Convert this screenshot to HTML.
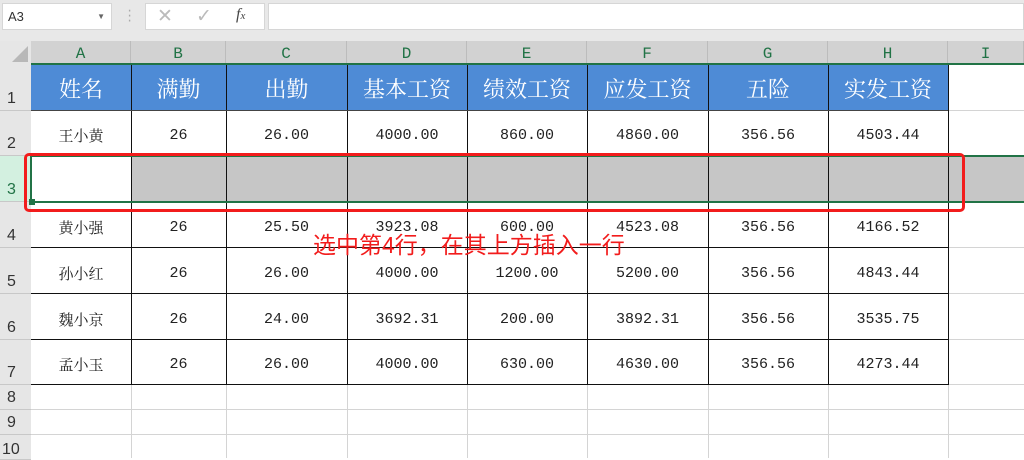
<!DOCTYPE html>
<html><head><meta charset="utf-8"><style>
*{margin:0;padding:0;box-sizing:border-box}
body{width:1024px;height:458px;overflow:hidden;background:#fff;position:relative;font-family:"Liberation Mono","Noto Serif CJK SC",serif}
.a{position:absolute}
.ch{position:absolute;top:41px;height:24px;background:#d2d2d2;color:#217346;font-size:16px;text-align:center;line-height:26px;border-right:1px solid #bcbcbc;font-family:"Liberation Mono",monospace}
.rh{position:absolute;left:0;width:31px;background:#e6e6e6;color:#333;font-family:"Liberation Sans",sans-serif;font-size:16px;padding-left:7px;border-bottom:1px solid #c8c8c8;display:flex;align-items:flex-end}
.c{position:absolute;text-align:center;display:flex;align-items:center;justify-content:center;font-size:15px;color:#222;padding-top:4px}
.h{color:#fff;font-size:22px;background:#4e8bd6;padding-top:0}
.vl{position:absolute;width:1px;background:#111}
.hl{position:absolute;height:1px;background:#111}
</style></head><body>
<div class="a" style="left:0;top:0;width:1024px;height:41px;background:#e8e8e8"></div>
<div class="a" style="left:2px;top:3px;width:110px;height:27px;background:#fff;border:1px solid #d6d6d6;font-family:'Liberation Sans',sans-serif;font-size:13px;line-height:25px;padding-left:5px;color:#333">A3<span style="position:absolute;right:6px;top:0;font-size:8px;color:#666">▼</span></div>
<div class="a" style="left:126px;top:9px;color:#aaa;font-size:12px;line-height:5px">·<br>·<br>·</div>
<div class="a" style="left:145px;top:3px;width:120px;height:27px;background:#fff;border:1px solid #d6d6d6"></div>
<div class="a" style="left:157px;top:5px;color:#bbb;font-family:'Liberation Sans',sans-serif;font-size:19px">✕</div>
<div class="a" style="left:196px;top:5px;color:#bbb;font-size:19px;font-family:'DejaVu Sans',sans-serif">✓</div>
<div class="a" style="left:236px;top:6px;color:#444;font-style:italic;font-size:16px;font-family:'Liberation Serif',serif">f<span style="font-size:11px">x</span></div>
<div class="a" style="left:268px;top:3px;width:756px;height:27px;background:#fff;border:1px solid #d6d6d6"></div>
<div class="a" style="left:0;top:41px;width:31px;height:24px;background:#e6e6e6"></div>
<div class="a" style="left:12px;top:46px;width:0;height:0;border-left:16px solid transparent;border-bottom:16px solid #b8b8b8"></div>
<div class="ch" style="left:31px;width:100px">A</div>
<div class="ch" style="left:131px;width:95px">B</div>
<div class="ch" style="left:226px;width:121px">C</div>
<div class="ch" style="left:347px;width:120px">D</div>
<div class="ch" style="left:467px;width:120px">E</div>
<div class="ch" style="left:587px;width:121px">F</div>
<div class="ch" style="left:708px;width:120px">G</div>
<div class="ch" style="left:828px;width:120px">H</div>
<div class="ch" style="left:948px;width:76px">I</div>
<div class="a" style="left:31px;top:63px;width:993px;height:2px;background:#217346"></div>
<div class="rh" style="top:65px;height:46px;padding-bottom:2px">1</div>
<div class="rh" style="top:111px;height:45px;padding-bottom:2px">2</div>
<div class="rh" style="top:156px;height:46px;padding-bottom:2px;background:#d3f0e0;color:#217346">3</div>
<div class="rh" style="top:202px;height:46px;padding-bottom:2px">4</div>
<div class="rh" style="top:248px;height:46px;padding-bottom:2px">5</div>
<div class="rh" style="top:294px;height:46px;padding-bottom:2px">6</div>
<div class="rh" style="top:340px;height:45px;padding-bottom:2px">7</div>
<div class="rh" style="top:385px;height:25px;padding-bottom:2px">8</div>
<div class="rh" style="top:410px;height:25px;padding-bottom:2px">9</div>
<div class="rh" style="top:435px;height:25px;padding-left:2px">10</div>
<div class="a" style="left:948px;top:65px;width:1px;height:393px;background:#d4d4d4"></div>
<div class="a" style="left:948px;top:110px;width:76px;height:1px;background:#d4d4d4"></div>
<div class="a" style="left:948px;top:247px;width:76px;height:1px;background:#d4d4d4"></div>
<div class="a" style="left:948px;top:293px;width:76px;height:1px;background:#d4d4d4"></div>
<div class="a" style="left:948px;top:339px;width:76px;height:1px;background:#d4d4d4"></div>
<div class="a" style="left:31px;top:409px;width:993px;height:1px;background:#d4d4d4"></div>
<div class="a" style="left:31px;top:434px;width:993px;height:1px;background:#d4d4d4"></div>
<div class="a" style="left:948px;top:384px;width:76px;height:1px;background:#d4d4d4"></div>
<div class="a" style="left:131px;top:385px;width:1px;height:73px;background:#d4d4d4"></div>
<div class="a" style="left:226px;top:385px;width:1px;height:73px;background:#d4d4d4"></div>
<div class="a" style="left:347px;top:385px;width:1px;height:73px;background:#d4d4d4"></div>
<div class="a" style="left:467px;top:385px;width:1px;height:73px;background:#d4d4d4"></div>
<div class="a" style="left:587px;top:385px;width:1px;height:73px;background:#d4d4d4"></div>
<div class="a" style="left:708px;top:385px;width:1px;height:73px;background:#d4d4d4"></div>
<div class="a" style="left:828px;top:385px;width:1px;height:73px;background:#d4d4d4"></div>
<div class="a" style="left:31px;top:65px;width:917px;height:46px;background:#4e8bd6"></div>
<div class="c h" style="left:31px;top:65px;width:100px;height:46px">姓名</div>
<div class="c h" style="left:131px;top:65px;width:95px;height:46px">满勤</div>
<div class="c h" style="left:226px;top:65px;width:121px;height:46px">出勤</div>
<div class="c h" style="left:347px;top:65px;width:120px;height:46px">基本工资</div>
<div class="c h" style="left:467px;top:65px;width:120px;height:46px">绩效工资</div>
<div class="c h" style="left:587px;top:65px;width:121px;height:46px">应发工资</div>
<div class="c h" style="left:708px;top:65px;width:120px;height:46px">五险</div>
<div class="c h" style="left:828px;top:65px;width:120px;height:46px">实发工资</div>
<div class="a" style="left:131px;top:156px;width:893px;height:46px;background:#c6c6c6"></div>
<div class="c" style="left:31px;top:111px;width:100px;height:45px">王小黄</div><div class="c" style="left:131px;top:111px;width:95px;height:45px">26</div><div class="c" style="left:226px;top:111px;width:121px;height:45px">26.00</div><div class="c" style="left:347px;top:111px;width:120px;height:45px">4000.00</div><div class="c" style="left:467px;top:111px;width:120px;height:45px">860.00</div><div class="c" style="left:587px;top:111px;width:121px;height:45px">4860.00</div><div class="c" style="left:708px;top:111px;width:120px;height:45px">356.56</div><div class="c" style="left:828px;top:111px;width:120px;height:45px">4503.44</div>
<div class="c" style="left:31px;top:202px;width:100px;height:46px">黄小强</div><div class="c" style="left:131px;top:202px;width:95px;height:46px">26</div><div class="c" style="left:226px;top:202px;width:121px;height:46px">25.50</div><div class="c" style="left:347px;top:202px;width:120px;height:46px">3923.08</div><div class="c" style="left:467px;top:202px;width:120px;height:46px">600.00</div><div class="c" style="left:587px;top:202px;width:121px;height:46px">4523.08</div><div class="c" style="left:708px;top:202px;width:120px;height:46px">356.56</div><div class="c" style="left:828px;top:202px;width:120px;height:46px">4166.52</div>
<div class="c" style="left:31px;top:248px;width:100px;height:46px">孙小红</div><div class="c" style="left:131px;top:248px;width:95px;height:46px">26</div><div class="c" style="left:226px;top:248px;width:121px;height:46px">26.00</div><div class="c" style="left:347px;top:248px;width:120px;height:46px">4000.00</div><div class="c" style="left:467px;top:248px;width:120px;height:46px">1200.00</div><div class="c" style="left:587px;top:248px;width:121px;height:46px">5200.00</div><div class="c" style="left:708px;top:248px;width:120px;height:46px">356.56</div><div class="c" style="left:828px;top:248px;width:120px;height:46px">4843.44</div>
<div class="c" style="left:31px;top:294px;width:100px;height:46px">魏小京</div><div class="c" style="left:131px;top:294px;width:95px;height:46px">26</div><div class="c" style="left:226px;top:294px;width:121px;height:46px">24.00</div><div class="c" style="left:347px;top:294px;width:120px;height:46px">3692.31</div><div class="c" style="left:467px;top:294px;width:120px;height:46px">200.00</div><div class="c" style="left:587px;top:294px;width:121px;height:46px">3892.31</div><div class="c" style="left:708px;top:294px;width:120px;height:46px">356.56</div><div class="c" style="left:828px;top:294px;width:120px;height:46px">3535.75</div>
<div class="c" style="left:31px;top:340px;width:100px;height:45px">孟小玉</div><div class="c" style="left:131px;top:340px;width:95px;height:45px">26</div><div class="c" style="left:226px;top:340px;width:121px;height:45px">26.00</div><div class="c" style="left:347px;top:340px;width:120px;height:45px">4000.00</div><div class="c" style="left:467px;top:340px;width:120px;height:45px">630.00</div><div class="c" style="left:587px;top:340px;width:121px;height:45px">4630.00</div><div class="c" style="left:708px;top:340px;width:120px;height:45px">356.56</div><div class="c" style="left:828px;top:340px;width:120px;height:45px">4273.44</div>
<div class="vl" style="left:131px;top:65px;height:320px"></div>
<div class="vl" style="left:226px;top:65px;height:320px"></div>
<div class="vl" style="left:347px;top:65px;height:320px"></div>
<div class="vl" style="left:467px;top:65px;height:320px"></div>
<div class="vl" style="left:587px;top:65px;height:320px"></div>
<div class="vl" style="left:708px;top:65px;height:320px"></div>
<div class="vl" style="left:828px;top:65px;height:320px"></div>
<div class="vl" style="left:948px;top:65px;height:320px"></div>
<div class="hl" style="left:31px;top:110px;width:917px;background:#444"></div>
<div class="hl" style="left:31px;top:247px;width:917px"></div>
<div class="hl" style="left:31px;top:293px;width:917px"></div>
<div class="hl" style="left:31px;top:339px;width:917px"></div>
<div class="hl" style="left:31px;top:384px;width:917px"></div>
<div class="a" style="left:30px;top:155px;width:994px;height:48px;border:2px solid #217346;border-right:none"></div>
<div class="a" style="left:29px;top:199px;width:6px;height:6px;background:#217346"></div>
<div class="a" style="left:24px;top:153px;width:941px;height:59px;border:3px solid #f21c1c;border-radius:5px"></div>
<div class="a" style="left:313px;top:231px;color:#f21c1c;font-size:23px;line-height:28px;font-family:'Liberation Sans','Noto Sans CJK SC',sans-serif;white-space:nowrap">选中第4行，在其上方插入一行</div>
</body></html>
